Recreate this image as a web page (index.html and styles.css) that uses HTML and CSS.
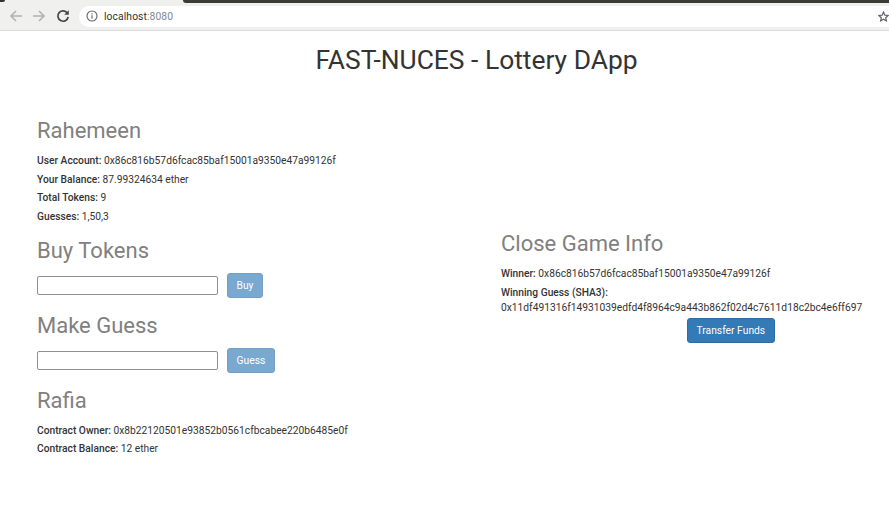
FILE: index.html
```html
<!DOCTYPE html>
<html lang="en">
<head>
<meta charset="utf-8">
<title>FAST-NUCES - Lottery DApp</title>
<link rel="stylesheet" href="styles.css">
</head>
<body>
<header class="chrome">
  <div class="tabstrip"><span class="tab-corner"></span><span class="tab-dark"></span></div>
  <div class="toolbar">
    <svg class="nav" width="14" height="14" viewBox="0 0 14 14"><path d="M13 7H2M7 2 2 7l5 5" fill="none" stroke="#b0b2b4" stroke-width="1.6"/></svg>
    <svg class="nav" width="14" height="14" viewBox="0 0 14 14"><path d="M1 7h11M7 2l5 5-5 5" fill="none" stroke="#b0b2b4" stroke-width="1.6"/></svg>
    <svg class="nav reload" width="14" height="14" viewBox="0 0 14 14"><path d="M11.6 4.4A5.2 5.2 0 1 0 12.2 8" fill="none" stroke="#454749" stroke-width="1.7"/><path d="M12.8 1.2v4.6H8.2z" fill="#454749"/></svg>
    <div class="omnibox">
      <svg width="12" height="12" viewBox="0 0 12 12"><circle cx="6" cy="6" r="5" fill="none" stroke="#5f6368" stroke-width="1.1"/><path d="M6 5.3v3.4M6 3.2v1.2" stroke="#5f6368" stroke-width="1.1"/></svg>
      <span class="url">localhost<span class="port">:8080</span></span>
      <svg class="star" width="11" height="11" viewBox="0 0 13 13"><path d="m6.5 1.3 1.6 3.6 3.9.4-2.9 2.6.8 3.8-3.4-2-3.4 2 .8-3.8L1 5.3l3.9-.4z" fill="none" stroke="#5f6368" stroke-width="1.4"/></svg>
    </div>
  </div>
</header>
<main class="page">
  <h1 class="title">FAST-NUCES - Lottery DApp</h1>
  <div class="columns">
    <section class="left">
      <h2>Rahemeen</h2>
      <p><b>User Account:</b> 0x86c816b57d6fcac85baf15001a9350e47a99126f</p>
      <p><b>Your Balance:</b> 87.99324634 ether</p>
      <p><b>Total Tokens:</b> 9</p>
      <p><b>Guesses:</b> 1,50,3</p>
      <h2 class="next">Buy Tokens</h2>
      <form class="entry"><input type="text" aria-label="Tokens"><button type="button" class="btn faded">Buy</button></form>
      <h2 class="next">Make Guess</h2>
      <form class="entry"><input type="text" aria-label="Guess"><button type="button" class="btn faded">Guess</button></form>
      <h2 class="next">Rafia</h2>
      <p><b>Contract Owner:</b> 0x8b22120501e93852b0561cfbcabee220b6485e0f</p>
      <p><b>Contract Balance:</b> 12 ether</p>
    </section>
    <section class="right">
      <h2>Close Game Info</h2>
      <p class="winner"><b>Winner:</b> 0x86c816b57d6fcac85baf15001a9350e47a99126f</p>
      <p class="hash"><b>Winning Guess (SHA3):</b><br>0x11df491316f14931039edfd4f8964c9a443b862f02d4c7611d18c2bc4e6ff697</p>
      <div class="action"><button type="button" class="btn">Transfer Funds</button></div>
    </section>
  </div>
</main>
</body>
</html>
```
FILE: styles.css
```css
* { box-sizing: border-box; }
html, body { margin: 0; height: 100%; overflow: hidden; }
body { font-family: Roboto, sans-serif; font-size: 10.24px; line-height: 15px; color: #333; background: #fff; }

.chrome { height: 31px; background: #f0f0ef; border-bottom: 1px solid #dadce0; display: flex; flex-direction: column; }
.tabstrip { height: 3px; display: flex; justify-content: space-between; flex: none; }
.tab-corner { width: 5px; height: 2px; background: #333; border-radius: 0 0 3px 0; }
.tab-dark { width: 706px; height: 3px; background: #3a3a36; border-radius: 0 0 0 4px; }
.toolbar { display: flex; align-items: center; gap: 9px; padding-left: 9px; flex: 1; padding-bottom: 1px; }
.reload { margin-left: 1px; }
.omnibox { flex: 1; height: 21px; background: #fff; border-radius: 11px 0 0 11px; display: flex; align-items: center; gap: 6px; padding-left: 7px; }
.url { font-size: 10.3px; color: #303133; letter-spacing: .1px; }
.port { color: #80868b; }
.star { margin-left: auto; }

.page { padding-left: 37px; }
.title { margin: 13px 0 0; padding-left: 27px; text-align: center; font-size: 26.4px; line-height: 32px; font-weight: 400; color: #333; }
.columns { display: grid; grid-template-columns: 464px 388px; }
h2 { margin: 0 0 9px; font-size: 22px; line-height: 26px; font-weight: 400; color: #808080; }
.left { padding-top: 42px; }
p { margin: 0 0 3.6px; }
b { font-weight: 500; }
.next { margin-top: 14px; }
.right { padding-top: 155px; }
.entry { display: flex; align-items: center; gap: 9px; margin: 0 0 15px; }
input { width: 181px; height: 19px; padding: 0 2px; border: 1px solid #8f8f8f; border-radius: 2px; background: #fff; }
.btn { font: 400 10.3px/15px Roboto, sans-serif; color: #fff; background: #337ab7; border: 1px solid #2e6da4; border-radius: 3px; padding: 3px 8.5px; height: 25px; }
.faded { opacity: .65; }
.winner { margin-bottom: 4px; }
.hash { margin-bottom: 3px; white-space: nowrap; }
.action { display: flex; padding-left: 186px; }
```
